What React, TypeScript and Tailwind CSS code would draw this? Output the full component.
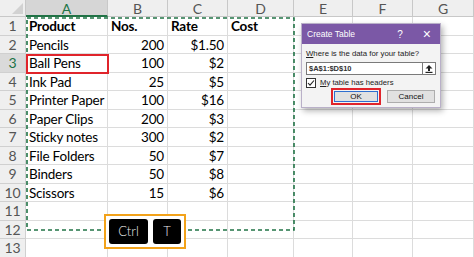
import React from "react";

const rows: [string, string, string][] = [
  ["Pencils", "200", "$1.50"],
  ["Ball Pens", "100", "$2"],
  ["Ink Pad", "25", "$5"],
  ["Printer Paper", "100", "$16"],
  ["Paper Clips", "200", "$3"],
  ["Sticky notes", "300", "$2"],
  ["File Folders", "50", "$7"],
  ["Binders", "50", "$8"],
  ["Scissors", "15", "$6"],
];

const cols = ["A", "B", "C", "D", "E", "F", "G"];
const sheetFont = { fontFamily: "Lato, 'Open Sans', sans-serif" };
const uiFont = { fontFamily: "'Liberation Sans', Arial, sans-serif" };
const keyFont = { fontFamily: "Lato, 'Open Sans', sans-serif", fontWeight: 300 };

function Cell({ children, right, bold }: { children?: React.ReactNode; right?: boolean; bold?: boolean }) {
  return (
    <div
      className={`h-[18.5px] border-r border-b border-[#dcdcdc] bg-white px-[3px] text-[13.5px] leading-[18px] tracking-[-0.2px] text-black whitespace-nowrap ${
        right ? "text-right" : "text-left"
      } ${bold ? "font-bold" : ""}`}
    >
      {children}
    </div>
  );
}

function RowNum({ n, active }: { n: number; active?: boolean }) {
  return (
    <div
      className={`h-[18.5px] border-r border-b border-[#d0d0d0] text-center text-[14px] leading-[18px] ${
        active ? "bg-[#dadada] text-[#217346]" : "bg-[#efefef] text-[#555]"
      }`}
    >
      {n}
    </div>
  );
}

export default function App() {
  const body: React.ReactNode[] = [];
  const all: [string, string, string, string][] = [
    ["Product", "Nos.", "Rate", "Cost"],
    ...rows.map((r) => [r[0], r[1], r[2], ""] as [string, string, string, string]),
  ];
  for (let i = 0; i < 13; i++) {
    const r = all[i];
    body.push(<RowNum key={`n${i}`} n={i + 1} active={i === 2} />);
    if (r) {
      const bold = i === 0;
      body.push(<Cell key={`a${i}`} bold={bold}>{r[0]}</Cell>);
      body.push(<Cell key={`b${i}`} bold={bold} right={!bold}>{r[1]}</Cell>);
      body.push(<Cell key={`c${i}`} bold={bold} right={!bold}>{r[2]}</Cell>);
      body.push(<Cell key={`d${i}`} bold={bold}>{r[3]}</Cell>);
    } else {
      for (let c = 0; c < 4; c++) body.push(<Cell key={`x${i}${c}`} />);
    }
    for (let c = 0; c < 3; c++) body.push(<Cell key={`e${i}${c}`} />);
  }

  return (
    <div className="relative h-[257px] w-[474px] overflow-hidden bg-white" style={sheetFont}>
      <div className="grid grid-cols-[26px_82px_60px_60px_66px_59px_60px_61px]">
        {/* corner */}
        <div className="relative h-[17px] border-r border-b border-[#c8c8c8] bg-[#efefef]">
          <svg className="absolute right-[2px] bottom-[2px]" width="11" height="11" viewBox="0 0 11 11">
            <path d="M11 0 L11 11 L0 11 Z" fill="#d2d2d2" />
          </svg>
        </div>
        {cols.map((c) => (
          <div
            key={c}
            className={`h-[17px] border-r text-center text-[14px] leading-[17px] ${
              c === "A"
                ? "border-b-2 border-b-[#217346] border-r-[#c8c8c8] bg-[#d6d6d6] text-[#217346]"
                : "border-b border-[#c8c8c8] bg-[#efefef] text-[#555]"
            }`}
          >
            {c}
          </div>
        ))}
        {body}
      </div>

      {/* copy marquee around A1:D10 */}
      <svg className="pointer-events-none absolute left-[26px] top-[17px]" width="270" height="215">
        <rect x="1" y="1" width="267" height="212" fill="none" stroke="#217346" strokeWidth="1.6" strokeDasharray="4 3" />
      </svg>

      {/* active cell A3 */}
      <div className="pointer-events-none absolute left-[26px] top-[54px] h-[20px] w-[83px] border-2 border-[#e0242b]" />

      {/* Create Table dialog */}
      <div
        className="absolute left-[301px] top-[23px] w-[140px] border border-[#b9b0c8] bg-[#f3f3f3] shadow-[2px_3px_6px_rgba(0,0,0,0.3)]"
        style={uiFont}
      >
        <div className="flex h-[20px] items-center justify-between bg-[#7b58a6] pl-[5px] pr-[9px] text-[8.5px] text-white">
          <span>Create Table</span>
          <div className="flex items-center gap-[20px]">
            <span className="text-[10px]">?</span>
            <span className="text-[14px] leading-none">×</span>
          </div>
        </div>
        <div className="px-[4px] pt-[5px] pb-[2px]">
          <div className="text-[7.8px] leading-[10px] text-[#222] whitespace-nowrap">
            <span className="underline">W</span>here is the data for your table?
          </div>
          <div className="mt-[3px] flex h-[13px]">
            <div className="flex w-[118px] items-center border border-[#7a7a7a] bg-white px-[2px] text-[7.5px] font-bold text-[#333]">
              $A$1:$D$10
            </div>
            <div className="flex w-[13px] items-center justify-center border border-l-0 border-[#7a7a7a] bg-white">
              <svg width="8" height="9" viewBox="0 0 8 9">
                <path d="M4 1 L7.5 4.5 L5 4.5 L5 7 L3 7 L3 4.5 L0.5 4.5 Z" fill="#222" />
                <rect x="0.5" y="7.8" width="7" height="1.2" fill="#222" />
              </svg>
            </div>
          </div>
          <div className="mt-[3px] flex items-center gap-[4px] text-[7.7px] leading-[10px] text-[#222] whitespace-nowrap">
            <div className="flex h-[10px] w-[10px] items-center justify-center border border-[#333] bg-white">
              <svg width="8" height="8" viewBox="0 0 8 8">
                <path d="M1 4 L3 6.2 L7 1.5" fill="none" stroke="#222" strokeWidth="1.1" />
              </svg>
            </div>
            <span>
              <span className="underline">M</span>y table has headers
            </span>
          </div>
          <div className="flex items-center justify-end gap-[6px] pr-[1px]">
            <div className="flex h-[17px] w-[50px] items-center justify-center border-2 border-[#e0242b] p-[1px]">
              <div className="flex h-full w-full items-center justify-center border border-[#2f6fcf] bg-[#e1e1e1] text-[8px] text-[#111]">
                OK
              </div>
            </div>
            <div className="flex h-[13px] w-[48px] items-center justify-center border border-[#adadad] bg-[#e1e1e1] text-[8px] text-[#111]">
              Cancel
            </div>
          </div>
        </div>
      </div>

      {/* Ctrl + T shortcut */}
      <div className="absolute left-[104px] top-[214px] flex h-[35px] items-center gap-[5px] border-2 border-[#f2a21a] bg-white px-[3px]">
        <div
          className="flex h-[25px] w-[39px] items-center justify-center rounded-[3px] bg-black text-[13px] text-[#e8e8e8]"
          style={keyFont}
        >
          Ctrl
        </div>
        <div
          className="flex h-[25px] w-[28px] items-center justify-center rounded-[3px] bg-black text-[13px] text-[#e8e8e8]"
          style={keyFont}
        >
          T
        </div>
      </div>
    </div>
  );
}
